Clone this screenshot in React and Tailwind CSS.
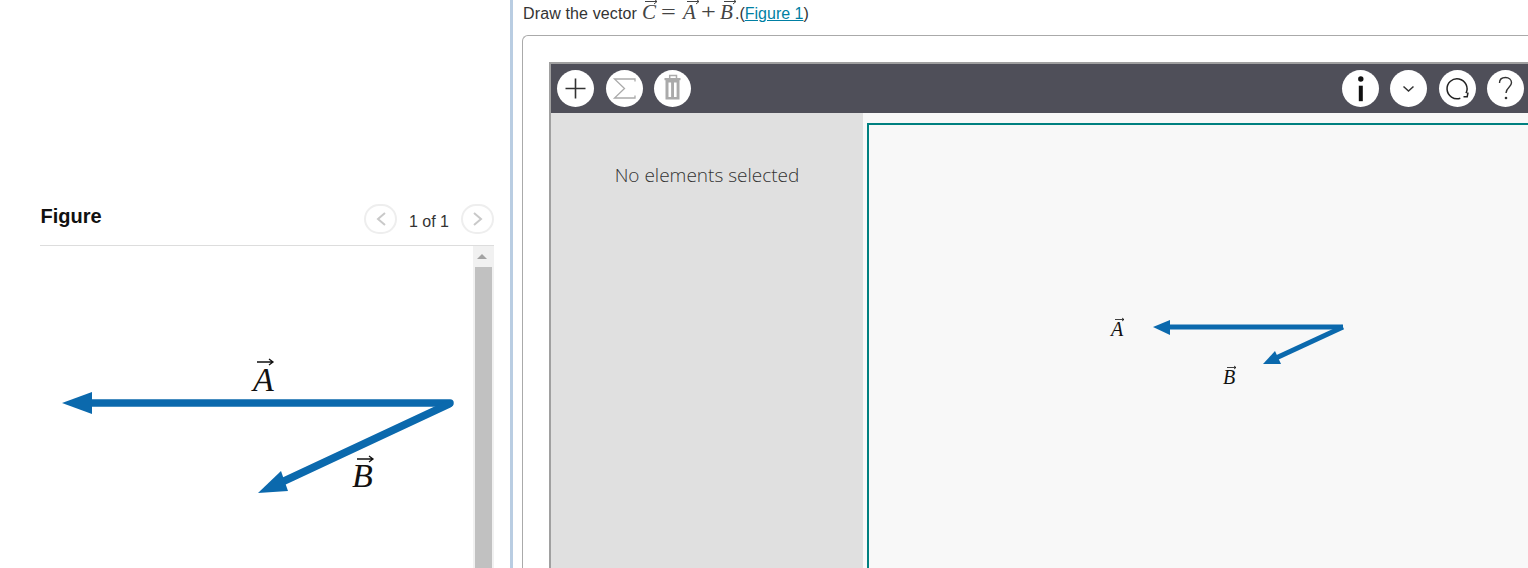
import React from 'react';

const sans = { fontFamily: '"Liberation Sans", Arial, sans-serif' };

const BLUE = '#0b69ad';

const ToolButton = ({ children }) => (
    <button className="flex h-[37px] w-[37px] shrink-0 items-center justify-center rounded-full bg-white">
        <svg width="37" height="37" viewBox="0 0 37 37" fill="none">{children}</svg>
    </button>
);

const PagerButton = ({ points }) => (
    <button className="flex h-[30px] w-[33px] items-center justify-center rounded-full border-2 border-[#eeeeee] bg-white">
        <svg width="12" height="18" viewBox="0 0 12 18" fill="none">
            <polyline points={points} stroke="#c9c9c9" strokeWidth="2" />
        </svg>
    </button>
);

// math letter with a small vector arrow on top
const MathVar = ({ children, className }) => (
    <span className={`relative inline-block font-['Liberation_Serif',serif] text-[21px] italic leading-none text-[#444] ${className}`}>
        {children}
        <svg className="absolute left-[4px] top-[-4px]" width="13" height="7" viewBox="0 0 13 7" fill="none">
            <path d="M0 3.500H12M9 1l3 2.500L9 6" stroke="#444" strokeWidth="1" />
        </svg>
    </span>
);

const Figure = () => (
    <svg width="433" height="322" viewBox="40 246 433 322" className="block shrink-0">
        <path d="M450 403H88" stroke={BLUE} strokeWidth="7.500" strokeLinecap="round" />
        <polygon points="62,403 92,392 92,414" fill={BLUE} />
        <path d="M449 404L282 482" stroke={BLUE} strokeWidth="7.500" strokeLinecap="round" />
        <polygon points="258,493 281,471 288,491" fill={BLUE} />
        <text x="253" y="391" fontFamily="Liberation Serif, serif" fontStyle="italic" fontSize="34" fill="#111">A</text>
        <path d="M257 362H273M269 359l4 3-4 3" stroke="#111" strokeWidth="1.300" fill="none" />
        <text x="352" y="487" fontFamily="Liberation Serif, serif" fontStyle="italic" fontSize="34" fill="#111">B</text>
        <path d="M357 459H373M369 456l4 3-4 3" stroke="#111" strokeWidth="1.300" fill="none" />
    </svg>
);

const Canvas = () => (
    <svg width="661" height="445" viewBox="869 125 661 445" className="block">
        <path d="M1343 327H1166" stroke={BLUE} strokeWidth="5" />
        <polygon points="1153,327 1170,320 1170,335" fill={BLUE} />
        <path d="M1343 327L1276 358" stroke={BLUE} strokeWidth="5" />
        <polygon points="1263,364 1275,351 1281,364" fill={BLUE} />
        <text x="1111" y="336" fontFamily="Liberation Serif, serif" fontStyle="italic" fontSize="20" fill="#111">A</text>
        <path d="M1115 319.500H1124M1122 318l2 1.500-2 1.500" stroke="#111" strokeWidth=".8" fill="none" />
        <text x="1223" y="384" fontFamily="Liberation Serif, serif" fontStyle="italic" fontSize="20" fill="#111">B</text>
        <path d="M1227 367.500H1236M1234 366l2 1.500-2 1.500" stroke="#111" strokeWidth=".8" fill="none" />
    </svg>
);

export default function App() {
    return (
        <div className="flex h-[568px] w-full overflow-hidden bg-white text-[#333]" style={sans}>
            {/* Figure column */}
            <div className="flex w-[510px] shrink-0 flex-col pl-[40px] pr-[16px] pt-[204px]">
                <div className="flex h-[42px] shrink-0 justify-between border-b border-[#dddddd]">
                    <h2 className="pl-[0.5px] text-[20px] font-bold leading-[24px] text-[#111]">Figure</h2>
                    <div className="flex h-[30px] items-center">
                        <PagerButton points="10,3 3,9 10,15" />
                        <span className="w-[64px] pt-[6px] text-center text-[16px]">1 of 1</span>
                        <PagerButton points="2,3 9,9 2,15" />
                    </div>
                </div>
                <div className="flex min-h-0 flex-1">
                    <Figure />
                    <div className="flex flex-1 flex-col bg-[#f1f1f1] px-[2px]">
                        <div className="flex h-[21px] shrink-0 items-center justify-center pr-[3px]">
                            <div className="h-0 w-0 border-x-[5px] border-b-[5px] border-x-transparent border-b-[#a3a3a3]" />
                        </div>
                        <div className="flex-1 bg-[#c1c1c1]" />
                    </div>
                </div>
            </div>

            <div className="w-[3px] shrink-0 bg-[#b9cde2]" />

            {/* Question column */}
            <div className="flex min-w-0 flex-1 flex-col pl-[9px]">
                <div className="flex h-[35px] shrink-0 items-baseline whitespace-nowrap pl-px pt-[2px] text-[16px] leading-[22px]">
                    <span className="tracking-[.13px]">Draw the vector</span>
                    <MathVar className="ml-[4px] w-[16px] pl-px">C</MathVar>
                    <span className="ml-[4px] w-[15px] scale-x-[1.25] text-center font-['Liberation_Serif',serif] text-[21px] leading-[20px] text-[#444]">=</span>
                    <MathVar className="ml-[7px] w-[15px]">A</MathVar>
                    <span className="ml-[3px] w-[15px] scale-x-[1.25] text-center font-['Liberation_Serif',serif] text-[21px] leading-[20px] text-[#444]">+</span>
                    <MathVar className="ml-[4px] w-[15px]">B</MathVar>
                    <span>.(</span>
                    <a className="text-[#007fa3] underline">Figure 1</a>
                    <span>)</span>
                </div>

                <div className="mr-[-20px] flex min-h-0 flex-1 flex-col rounded-tl-[6px] border-l border-t border-[#aaaaaa] pl-[26px] pt-[26px]">
                    <div className="flex min-h-0 flex-1 flex-col border-l-2 border-t-2 border-[#a0a0a0]">
                        {/* Toolbar */}
                        <div className="flex h-[49px] shrink-0 items-center justify-between bg-[#4f4f59] pl-[6px] pr-[24px]">
                            <div className="flex gap-[11.5px]">
                                <ToolButton>
                                    <path d="M8.500 18.500H28.500M18.500 8.500V28.500" stroke="#333" strokeWidth="1.600" />
                                </ToolButton>
                                <ToolButton>
                                    <path d="M29 11.500V9H8.500L18.500 18.500L8.500 28H29V25.500" stroke="#aaa" strokeWidth="1.300" />
                                </ToolButton>
                                <ToolButton>
                                    <path d="M15.700 8V5.500H22.500V8" stroke="#aaa" strokeWidth="1.500" />
                                    <rect x="10.500" y="8" width="16" height="2.200" fill="#aaa" />
                                    <rect x="11.500" y="10" width="14" height="19.500" fill="#aaa" />
                                    <rect x="14.500" y="12.500" width="2.600" height="14.500" fill="#fff" />
                                    <rect x="20" y="12.500" width="2.600" height="14.500" fill="#fff" />
                                </ToolButton>
                            </div>
                            <div className="flex gap-[11.5px]">
                                <ToolButton>
                                    <circle cx="18.800" cy="9" r="2.700" fill="#111" />
                                    <rect x="16.800" y="15.700" width="4" height="15.500" fill="#111" />
                                </ToolButton>
                                <ToolButton>
                                    <path d="M13.500 16.500L18.500 21L23.500 16.500" stroke="#333" strokeWidth="1.500" />
                                </ToolButton>
                                <ToolButton>
                                    <path d="M21.300 28.200A10 10 0 1 1 27 23.200" stroke="#222" strokeWidth="1.500" />
                                    <path d="M24.500 26.800H28.200L29 22.500" stroke="#222" strokeWidth="1.500" />
                                </ToolButton>
                                <ToolButton>
                                    <path d="M12.500 13C12.500 9.500 15 7.500 18.500 7.500C22 7.500 24.500 9.700 24.500 12.800C24.500 17 19 17.500 19 23" stroke="#333" strokeWidth="1.400" />
                                    <circle cx="19" cy="28" r="1.300" fill="#333" />
                                </ToolButton>
                            </div>
                        </div>

                        <div className="flex min-h-0 flex-1 bg-[#f8f8f8]">
                            <div className="w-[312px] shrink-0 bg-[#e0e0e0] pt-[49px] text-center font-['Open_Sans',sans-serif] text-[19px] font-light leading-[26px] text-[#333]">
                                No elements selected
                            </div>
                            <div className="min-w-0 flex-1 pl-[4px] pt-[10px]">
                                <div className="h-full border-l-2 border-t-2 border-[#008080]">
                                    <Canvas />
                                </div>
                            </div>
                        </div>
                    </div>
                </div>
            </div>
        </div>
    );
}
